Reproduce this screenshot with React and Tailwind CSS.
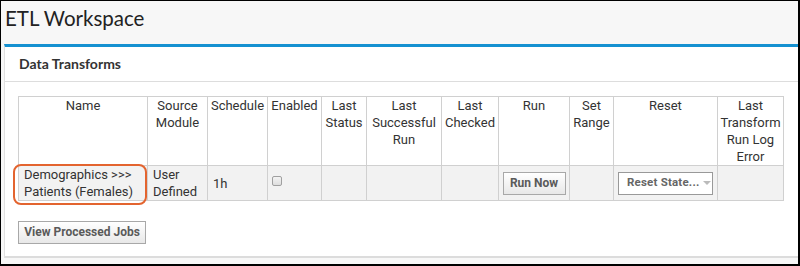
const cols = [
  { label: 'Name', w: 129 },
  { label: 'Source Module', w: 60 },
  { label: 'Schedule', w: 60 },
  { label: 'Enabled', w: 54 },
  { label: 'Last Status', w: 45 },
  { label: 'Last Successful Run', w: 75 },
  { label: 'Last Checked', w: 57 },
  { label: 'Run', w: 71 },
  { label: 'Set Range', w: 44 },
  { label: 'Reset', w: 104 },
  { label: 'Last Transform Run Log Error', w: 66 },
];

function GrayButton({ children, className = '' }) {
  return (
    <button type="button"
      className={`h-[23px] border border-[#a8a8a8] bg-gradient-to-b from-white to-[#e8e8e8] text-[12px] font-bold text-[#5a5a5a] leading-none whitespace-nowrap ${className}`}>
      {children}
    </button>
  );
}

export default function App() {
  return (
    <div className="w-[800px] h-[266px] box-border overflow-hidden bg-[#f7f7f7] border-l border-t border-r-2 border-b-2 border-black font-['Roboto',sans-serif]">
      <div className="h-[43px] pl-[4px] pt-[3px]">
        <h1 className="font-['Lato',sans-serif] text-[20.5px] leading-[28px] text-[#222]">ETL Workspace</h1>
      </div>

      <div className="ml-[3px] h-[214px] bg-white border-t-[3px] border-t-[#1591d1] border-l border-l-[#e0e0e0] border-b-2 border-b-[#dcdcdc]">
        <div className="h-[35px] flex items-center pl-[14px] pb-[2px] border-b border-[#dddddd]">
          <span className="font-['Lato',sans-serif] font-bold text-[14px] text-[#333]">Data Transforms</span>
        </div>

        <div className="pl-[13px] pt-[14px]">
          <table className="border-collapse text-[13px] leading-[17px] text-[#333]">
            <thead>
              <tr>
                {cols.map(c => (
                  <th key={c.label} style={{ width: c.w }}
                    className="border border-[#d0d0d0] px-[2px] py-0 font-normal text-center align-top h-[69px]">
                    {c.label}
                  </th>
                ))}
              </tr>
            </thead>
            <tbody>
              <tr className="bg-[#f2f2f2] h-[35px]">
                <td className="relative border border-[#d0d0d0] pl-[5px] align-middle">
                  Demographics &gt;&gt;&gt;<br />Patients (Females)
                  <div className="absolute -left-[6px] right-0 -top-[2px] -bottom-[5px] border-2 border-[#e3642f] rounded-[8px]" />
                </td>
                <td className="border border-[#d0d0d0] pl-[5px] align-middle">User<br />Defined</td>
                <td className="border border-[#d0d0d0] pl-[5px] align-middle">1h</td>
                <td className="border border-[#d0d0d0] pl-[4px] align-top pt-[10px]">
                  <div className="w-[10px] h-[10px] rounded-[2px] border border-[#a0a0a0] bg-gradient-to-b from-[#f4f4f4] to-[#dedede]" />
                </td>
                <td className="border border-[#d0d0d0]" />
                <td className="border border-[#d0d0d0]" />
                <td className="border border-[#d0d0d0]" />
                <td className="border border-[#d0d0d0] text-center align-middle">
                  <GrayButton className="w-[63px]">Run Now</GrayButton>
                </td>
                <td className="border border-[#d0d0d0]" />
                <td className="border border-[#d0d0d0] pl-[4px] align-middle">
                  <div className="w-[95px] h-[23px] border border-[#999] bg-white flex items-center pl-[8px] pr-[5px] gap-[4px]">
                    <span className="text-[11.5px] font-bold text-[#666] leading-none whitespace-nowrap tracking-[0.2px]">Reset State...</span>
                    <span className="ml-auto w-0 h-0 border-l-[4px] border-r-[4px] border-t-[4px] border-l-transparent border-r-transparent border-t-[#bbb]" />
                  </div>
                </td>
                <td className="border border-[#d0d0d0]" />
              </tr>
            </tbody>
          </table>

          <div className="pt-[18px]">
            <GrayButton className="w-[128px]">View Processed Jobs</GrayButton>
          </div>
        </div>
      </div>
    </div>
  );
}
